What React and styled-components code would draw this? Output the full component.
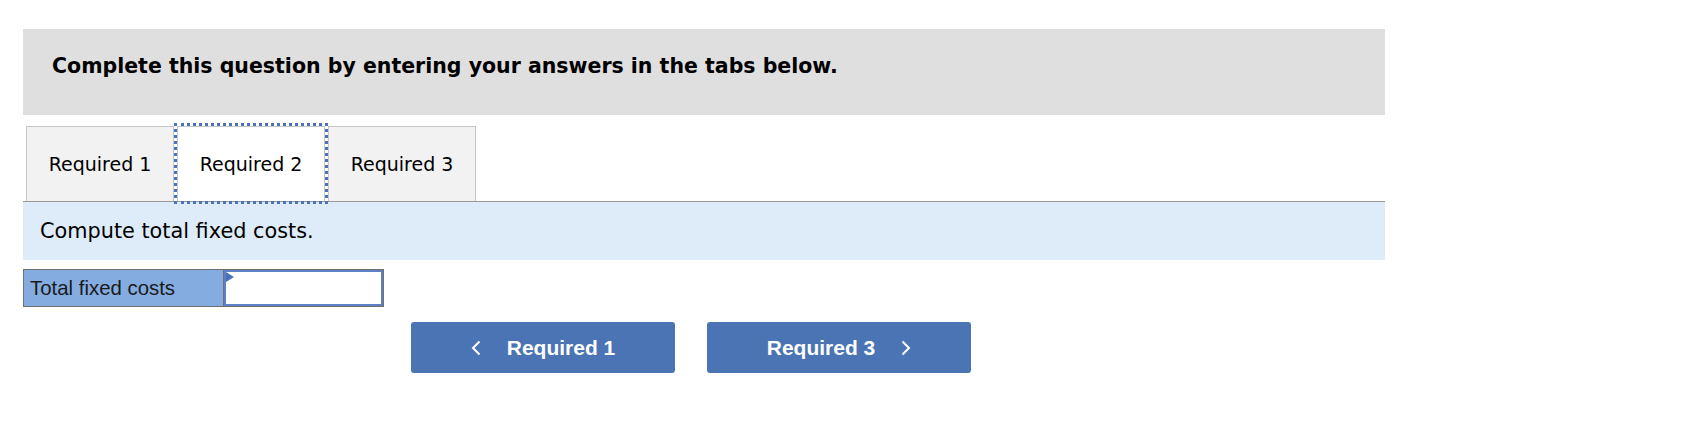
import React from 'react'
import styled, { createGlobalStyle } from 'styled-components'

const GlobalStyle = createGlobalStyle`
  html, body {
    margin: 0;
    padding: 0;
    background: #ffffff;
  }
  body {
    font-family: "DejaVu Sans", Verdana, sans-serif;
    color: #000;
  }
`

const Page = styled.div`
  padding: 29px 0 0 23px;
`

const Wrapper = styled.div`
  width: 1362px;
  display: flex;
  flex-direction: column;
`

const Instructions = styled.div`
  height: 86px;
  box-sizing: border-box;
  background: #dfdfdf;
  padding: 25px 0 0 29px;
  font-family: "DejaVu Sans", Verdana, sans-serif;
  font-weight: bold;
  font-size: 20.5px;
`

const TabBar = styled.div`
  margin-top: 11px;
  display: flex;
  gap: 3px;
  padding-left: 3px;
  border-bottom: 1px solid #999999;
`

const Tab = styled.button`
  width: 148px;
  height: 75px;
  box-sizing: border-box;
  border: 1px solid #c6c6c6;
  border-bottom: none;
  background: ${props => (props.$active ? '#ffffff' : '#f2f2f2')};
  outline: ${props => (props.$active ? '3px dotted #4b73b9' : 'none')};
  position: relative;
  z-index: ${props => (props.$active ? 1 : 0)};
  font-family: "DejaVu Sans", Verdana, sans-serif;
  font-size: 19px;
  color: #000;
  padding: 0;
  cursor: pointer;
`

const Prompt = styled.div`
  height: 58px;
  background: #deebf8;
  display: flex;
  align-items: center;
  padding-left: 17px;
  font-family: "DejaVu Sans", Verdana, sans-serif;
  font-size: 20.8px;
`

const AnswerRow = styled.div`
  margin-top: 9px;
  display: flex;
  width: 361px;
  height: 38px;
  box-sizing: border-box;
  border: 1px solid #707070;
`

const Label = styled.div`
  width: 200px;
  box-sizing: border-box;
  background: #84ace0;
  border-right: 1px solid #707070;
  display: flex;
  align-items: center;
  padding-left: 6px;
  font-family: "Liberation Sans", Arial, sans-serif;
  font-size: 20.4px;
  color: #1a1a1a;
`

const InputCell = styled.div`
  flex: 1;
  position: relative;
  display: flex;
`

const Input = styled.input`
  flex: 1;
  width: 100%;
  box-sizing: border-box;
  border: 2px solid #5b80c4;
  background: #fff;
  margin: 0;
  padding: 0 6px;
  font-size: 16px;
  outline: none;
`

const Flag = styled.span`
  position: absolute;
  left: 2px;
  top: 2px;
  width: 0;
  height: 0;
  border-top: 5px solid transparent;
  border-bottom: 5px solid transparent;
  border-left: 8px solid #4a72b8;
`

const NavRow = styled.div`
  margin-top: 15px;
  margin-left: 388px;
  display: flex;
  gap: 32px;
`

const NavButton = styled.button`
  width: 264px;
  height: 51px;
  border: none;
  border-radius: 3px;
  background: #4a74b4;
  color: #fff;
  display: flex;
  align-items: center;
  justify-content: center;
  gap: 26px;
  font-family: "Liberation Sans", Arial, sans-serif;
  font-weight: bold;
  font-size: 21px;
  padding: 0;
  cursor: pointer;
`

const Chevron = ({ dir }) => (
  <svg width="10" height="16" viewBox="0 0 10 16" fill="none">
    <path
      d={dir === 'left' ? 'M8.5 1.5 L2 8 L8.5 14.5' : 'M1.5 1.5 L8 8 L1.5 14.5'}
      stroke="#fff"
      strokeWidth="2"
    />
  </svg>
)

const App = () => {
  const tabs = ['Required 1', 'Required 2', 'Required 3']
  const [active, setActive] = React.useState(1)

  return (
    <Page>
      <GlobalStyle />
      <Wrapper>
        <Instructions>Complete this question by entering your answers in the tabs below.</Instructions>
        <TabBar>
          {tabs.map((t, i) => (
            <Tab key={t} $active={i === active} onClick={() => setActive(i)}>
              {t}
            </Tab>
          ))}
        </TabBar>
        <Prompt>Compute total fixed costs.</Prompt>
        <AnswerRow>
          <Label>Total fixed costs</Label>
          <InputCell>
            <Flag />
            <Input type="text" />
          </InputCell>
        </AnswerRow>
        <NavRow>
          <NavButton>
            <Chevron dir="left" />
            Required 1
          </NavButton>
          <NavButton>
            Required 3
            <Chevron dir="right" />
          </NavButton>
        </NavRow>
      </Wrapper>
    </Page>
  )
}

export default App
